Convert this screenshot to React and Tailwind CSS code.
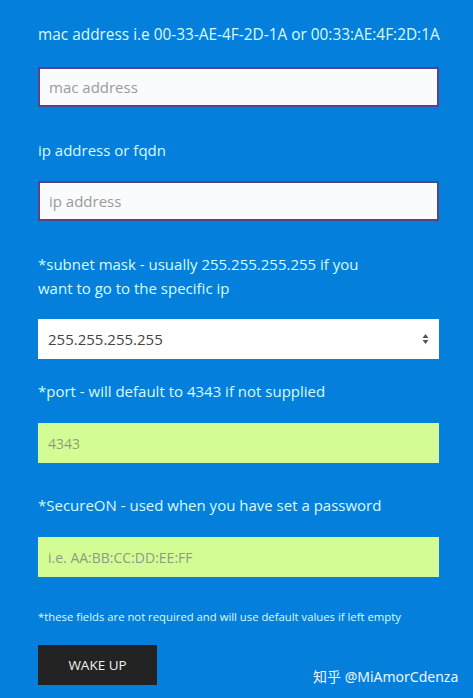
export default function App() {
  const font = { fontFamily: '"Open Sans", "Noto Sans", sans-serif' };
  return (
    <div className="relative w-[473px] h-[698px] bg-[#0480dc] overflow-hidden" style={font}>
      <div className="flex flex-col px-[38px] pt-[24px] w-full">
        <label className="text-[15.4px] leading-[22px] text-[#d8fbff] whitespace-nowrap">mac address i.e 00-33-AE-4F-2D-1A or 00:33:AE:4F:2D:1A</label>
        <div className="mt-[21px] h-[40px] w-[401px] bg-[#fafbfd] border-2 border-[#54448a] flex items-center px-[9px]">
          <span className="text-[15px] text-[#9a9a9a]">mac address</span>
        </div>
        <label className="mt-[32px] text-[15px] leading-[22px] text-[#d8fbff]">ip address or fqdn</label>
        <div className="mt-[20px] h-[40px] w-[401px] bg-[#fafbfd] border-2 border-[#54448a] flex items-center px-[9px]">
          <span className="text-[15px] text-[#9a9a9a]">ip address</span>
        </div>
        <label className="mt-[31px] text-[15px] leading-[24px] text-[#d8fbff] w-[340px]">*subnet mask - usually 255.255.255.255 if you want to go to the specific ip</label>
        <div className="mt-[19px] h-[40px] w-[401px] bg-white flex items-center justify-between pl-[10px] pr-[10px]">
          <span className="text-[15px] text-[#444]">255.255.255.255</span>
          <svg width="7" height="12" viewBox="0 0 7 12"><path d="M3.5 1 L6.5 5 L0.5 5 Z" fill="#555" /><path d="M3.5 11 L6.5 7 L0.5 7 Z" fill="#555" /></svg>
        </div>
        <label className="mt-[21px] text-[15px] leading-[22px] text-[#d8fbff]">*port - will default to 4343 if not supplied</label>
        <div className="mt-[21px] h-[40px] w-[401px] bg-[#d3fd94] flex items-center px-[10px]">
          <span className="text-[14px] text-[#8f9a86]">4343</span>
        </div>
        <label className="mt-[31px] text-[15px] leading-[22px] text-[#d8fbff]">*SecureON - used when you have set a password</label>
        <div className="mt-[21px] h-[40px] w-[401px] bg-[#d3fd94] flex items-center px-[10px]">
          <span className="text-[14px] text-[#8f9a86]">i.e. AA:BB:CC:DD:EE:FF</span>
        </div>
        <p className="mt-[32px] text-[11.3px] leading-[16px] text-[#d8fbff] whitespace-nowrap">*these fields are not required and will use default values if left empty</p>
        <div className="mt-[20px] h-[40px] w-[119px] bg-[#232323] flex items-center justify-center">
          <span className="text-[13.5px] text-[#f0f0f0]">WAKE UP</span>
        </div>
      </div>
      <div className="absolute left-[313px] top-[666px] text-[14px] text-[#eef4fa]" style={{ fontFamily: '"Noto Sans", "Noto Sans CJK SC", sans-serif' }}>知乎 @MiAmorCdenza</div>
    </div>
  );
}
